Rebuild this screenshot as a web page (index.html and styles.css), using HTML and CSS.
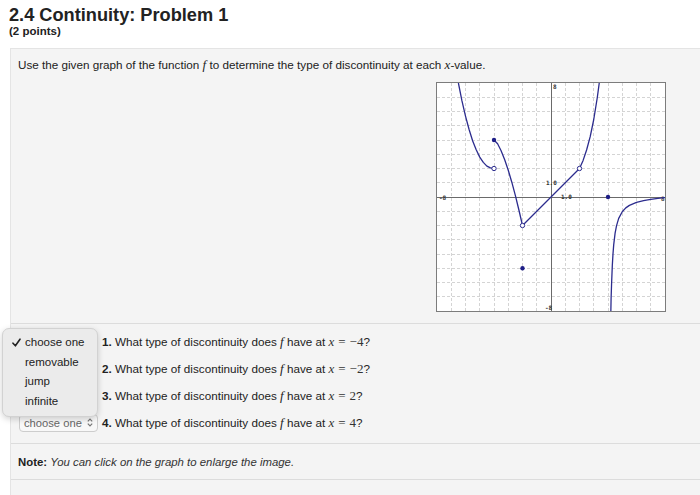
FILE: index.html
```html
<!DOCTYPE html>
<html lang="en">
<head>
<meta charset="utf-8">
<title>2.4 Continuity: Problem 1</title>
<link rel="stylesheet" href="styles.css">
</head>
<body>
<header class="head">
  <h1 class="title">2.4 Continuity: Problem 1</h1>
  <div class="points">(2 points)</div>
</header>
<section class="panel">
  <p class="intro">Use the given graph of the function <i class="mi">f</i> to determine the type of discontinuity at each <i class="mi">x</i>-value.</p>
  <div class="graph-row">
    <div class="graph">
      <svg width="228" height="228" viewBox="0 0 228 228">
        <g class="grid">
          <path d="M14.5 0V228M28.5 0V228M42.5 0V228M57.5 0V228M71.5 0V228M85.5 0V228M99.5 0V228M128.5 0V228M142.5 0V228M156.5 0V228M171.5 0V228M185.5 0V228M199.5 0V228M213.5 0V228"/>
          <path d="M0 14.5H228M0 28.5H228M0 42.5H228M0 57.5H228M0 71.5H228M0 85.5H228M0 99.5H228M0 128.5H228M0 142.5H228M0 156.5H228M0 171.5H228M0 185.5H228M0 199.5H228M0 213.5H228"/>
        </g>
        <path class="axis" d="M0 114.5H228M114.5 0V228"/>
        <g class="lbl">
          <text x="2" y="117">-8</text>
          <text x="224" y="118">8</text>
          <text x="116" y="6">8</text>
          <text x="108" y="227">-8</text>
          <text x="109" y="102">1.0</text>
          <text x="124" y="116">1.0</text>
        </g>
        <g class="curve">
          <path d="M21.4 0L24.9 17.7L28.5 33.1L32.1 46.5L35.6 57.7L39.2 66.8L42.75 74.1L46.3 79.4L49.9 83.1L53.4 84.9L57 85.5"/>
          <path d="M57 57L60.6 60.8L64.1 67.7L67.7 76.7L71.25 87.2L74.8 99.2L78.4 112.6L81.9 127L85.5 142.5"/>
          <path d="M85.5 142.5L142.5 85.5"/>
          <path d="M142.5 85.5L146.1 77.4L149.6 67L153.2 53.7L156.75 36.5L160.3 14.5L162.25 0"/>
          <path d="M173.85 228L174.1 215.2L174.6 200.2L175.3 182.7L176 170.7L176.7 161.9L178.1 150.2L179.55 142.6L181.7 135.4L185.25 128.7L188.8 124.9L192.4 122.4L199.5 119.4L206.6 117.6L213.75 116.4L220.9 115.4L228 114.7"/>
        </g>
        <g class="dot">
          <circle cx="57" cy="57" r="2.2"/>
          <circle cx="85.5" cy="185.25" r="2.2"/>
          <circle cx="171" cy="114" r="2.2"/>
        </g>
        <g class="hole">
          <circle cx="57" cy="85.5" r="2.2"/>
          <circle cx="85.5" cy="142.5" r="2.2"/>
          <circle cx="142.5" cy="85.5" r="2.2"/>
        </g>
      </svg>
    </div>
  </div>
  <div class="questions">
    <div class="q">
      <div class="select covered">choose one<svg class="arr" width="6" height="9" viewBox="0 0 6 9"><path d="M0.8 3.4L3 1.2L5.2 3.4M0.8 5.6L3 7.8L5.2 5.6"/></svg></div>
      <span class="qt"><b>1.</b> What type of discontinuity does <i class="mi">f</i> have at <span class="m"><i>x</i><span class="rel">=</span>−4</span>?</span>
    </div>
    <div class="q">
      <div class="select covered">choose one<svg class="arr" width="6" height="9" viewBox="0 0 6 9"><path d="M0.8 3.4L3 1.2L5.2 3.4M0.8 5.6L3 7.8L5.2 5.6"/></svg></div>
      <span class="qt"><b>2.</b> What type of discontinuity does <i class="mi">f</i> have at <span class="m"><i>x</i><span class="rel">=</span>−2</span>?</span>
    </div>
    <div class="q">
      <div class="select covered">choose one<svg class="arr" width="6" height="9" viewBox="0 0 6 9"><path d="M0.8 3.4L3 1.2L5.2 3.4M0.8 5.6L3 7.8L5.2 5.6"/></svg></div>
      <span class="qt"><b>3.</b> What type of discontinuity does <i class="mi">f</i> have at <span class="m"><i>x</i><span class="rel">=</span>2</span>?</span>
    </div>
    <div class="q">
      <div class="select">choose one<svg class="arr" width="6" height="9" viewBox="0 0 6 9"><path d="M0.8 3.4L3 1.2L5.2 3.4M0.8 5.6L3 7.8L5.2 5.6"/></svg></div>
      <span class="qt"><b>4.</b> What type of discontinuity does <i class="mi">f</i> have at <span class="m"><i>x</i><span class="rel">=</span>4</span>?</span>
    </div>
    <ul class="menu">
      <li class="opt sel"><svg class="check" width="9" height="9" viewBox="0 0 9 9"><path d="M1 5.2L3.4 7.8L8 1.2"/></svg>choose one</li>
      <li class="opt">removable</li>
      <li class="opt">jump</li>
      <li class="opt">infinite</li>
    </ul>
  </div>
  <p class="note"><b>Note:</b> <i>You can click on the graph to enlarge the image.</i></p>
</section>
</body>
</html>
```
FILE: styles.css
```css
html, body {
  margin: 0;
  padding: 0;
  background: #fff;
  overflow: hidden;
}
body {
  font-family: "Liberation Sans", Arial, sans-serif;
  color: #222;
  height: 495px;
}
.head {
  padding: 4px 0 0 9px;
}
.title {
  margin: 0;
  font-size: 18.2px;
  line-height: 22px;
  font-weight: bold;
  color: #222;
}
.points {
  margin-top: -2px;
  font-size: 11.5px;
  line-height: 14px;
  font-weight: bold;
}
.panel {
  margin: 10px 0 0 10px;
  background: #f4f4f4;
  border-top: 1px solid #e4e4e4;
  border-left: 1px solid #e4e4e4;
  height: 460px;
}
.intro {
  margin: 0;
  padding: 9px 0 0 7px;
  font-size: 11.7px;
  line-height: 14px;
}
.mi {
  font-family: "Liberation Serif", "Times New Roman", serif;
  font-size: 13px;
  font-style: italic;
}
.graph-row {
  display: flex;
  justify-content: flex-end;
  padding: 10px 34px 0 0;
}
.graph {
  background: #fff;
  border: 1px solid #7c7c7c;
  width: 228px;
  height: 228px;
}
.graph svg {
  display: block;
}
.grid path {
  stroke: #d4d4d4;
  stroke-width: 1;
  stroke-dasharray: 3 2;
  fill: none;
}
.axis {
  stroke: #6a6a6a;
  stroke-width: 1;
  fill: none;
}
.lbl text {
  font-family: "DejaVu Sans Mono", monospace;
  font-size: 6px;
  font-weight: bold;
  fill: #333;
}
.curve path {
  stroke: #2c2c8e;
  stroke-width: 1.3;
  fill: none;
  stroke-linejoin: round;
}
.dot circle {
  fill: #1e1e86;
}
.hole circle {
  fill: #fff;
  stroke: #2c2c8e;
  stroke-width: 1;
}
.questions {
  position: relative;
  margin-top: 11px;
  padding: 4px 0 7px 8px;
  border-top: 1px solid #dcdcdc;
  border-bottom: 1px solid #dcdcdc;
}
.q {
  display: flex;
  align-items: center;
  gap: 4px;
  height: 27px;
  font-size: 11.7px;
}
.select {
  box-sizing: border-box;
  flex: none;
  width: 79px;
  height: 18px;
  display: flex;
  align-items: center;
  justify-content: space-between;
  padding: 0 4px 0 4px;
  border: 1px solid #cdcdcd;
  border-radius: 4px;
  background: #f8f8f8;
  color: #666;
  font-size: 11.2px;
}
.select.covered {
  visibility: hidden;
}
.arr path {
  stroke: #777;
  stroke-width: 1.2;
  fill: none;
}
.qt b {
  font-weight: bold;
}
.m {
  font-family: "Liberation Serif", "Times New Roman", serif;
  font-size: 13px;
  color: #333;
}
.m i {
  font-style: italic;
}
.rel {
  margin: 0 4px;
}
.menu {
  position: absolute;
  left: -9px;
  top: 4px;
  width: 96px;
  box-sizing: border-box;
  margin: 0;
  padding: 4px 0 5px 0;
  list-style: none;
  background: #ebebeb;
  border: 1px solid #d2d2d2;
  border-radius: 7px;
  box-shadow: 0 2px 6px rgba(0, 0, 0, 0.18);
}
.opt {
  position: relative;
  height: 19.5px;
  line-height: 19.5px;
  padding-left: 22px;
  font-size: 11.5px;
  color: #222;
}
.check {
  position: absolute;
  left: 9px;
  top: 5px;
}
.check path {
  stroke: #222;
  stroke-width: 1.6;
  fill: none;
  stroke-linecap: round;
  stroke-linejoin: round;
}
.note {
  margin: 0;
  padding: 11px 0 10px 7px;
  font-size: 11.4px;
  line-height: 14px;
  border-bottom: 1px solid #dcdcdc;
}
.note i {
  color: #333;
}
```
